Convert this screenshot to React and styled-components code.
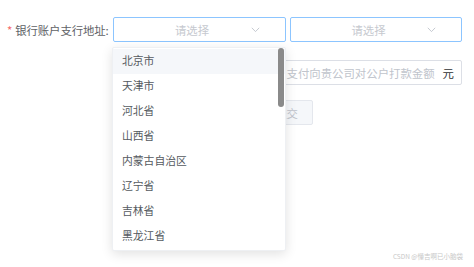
import styled, { createGlobalStyle } from 'styled-components';

const GlobalStyle = createGlobalStyle`
  html, body {
    margin: 0;
    background: #ffffff;
    font-family: "Noto Sans CJK SC", "Noto Sans", sans-serif;
  }
`

const provinces = ["北京市", "天津市", "河北省", "山西省", "内蒙古自治区", "辽宁省", "吉林省", "黑龙江省"];

const Chevron = () => (
    <svg width="9" height="6" viewBox="0 0 9 6" fill="none">
        <path d="M0.8 0.8L4.5 4.6L8.2 0.8" stroke="#c0c4cc" strokeWidth="0.9" />
    </svg>
)

const App = () => {
  return (
      <Page>
        <GlobalStyle />
        <FormRow>
            <Label><Star>*</Star>银行账户支行地址:</Label>
            <SelectBox>
                <Placeholder>请选择</Placeholder>
                <Arrow><Chevron /></Arrow>
            </SelectBox>
            <SelectBox $w={172}>
                <Placeholder>请选择</Placeholder>
                <Arrow><Chevron /></Arrow>
            </SelectBox>
        </FormRow>
        <FormRow $gap={18}>
            <Label />
            <InputBox>
                <InputHint>支付向贵公司对公户打款金额</InputHint>
                <Suffix>元</Suffix>
            </InputBox>
        </FormRow>
        <FormRow $gap={15}>
            <Label />
            <SubmitButton>提交</SubmitButton>
        </FormRow>
        <Dropdown>
            {provinces.map((name, i) => (
                <Option key={name} $active={i === 0}>{name}</Option>
            ))}
            <ScrollThumb />
        </Dropdown>
        <Watermark>CSDN @懂吉啊已小脑袋</Watermark>
      </Page>
  )
}

export default App

const Page = styled.div`
    position: relative;
    padding-top: 17px;
    display: flex;
    flex-direction: column;
    width: 474px;
    height: 267px;
    box-sizing: border-box;
    overflow: hidden;
`
const FormRow = styled.div`
    display: flex;
    flex-direction: row;
    align-items: center;
    gap: 4px;
    margin-top: ${p => p.$gap || 0}px;
    height: 25px;
`
const Label = styled.div`
    width: 109px;
    box-sizing: border-box;
    padding-left: 7px;
    font-size: 11.4px;
    color: #606266;
    white-space: nowrap;
    letter-spacing: -0.1px;
`
const Star = styled.span`
    color: #f56c6c;
    margin-right: 3px;
`
const SelectBox = styled.div`
    position: relative;
    width: ${p => p.$w || 173}px;
    height: 25px;
    box-sizing: border-box;
    border: 1px solid #8cc5ff;
    border-radius: 2px;
    display: flex;
    align-items: center;
    padding: 0 25px 0 10px;
`
const Placeholder = styled.div`
    flex: 1;
    text-align: center;
    font-size: 11.4px;
    color: #c6c9cf;
`
const Arrow = styled.div`
    position: absolute;
    right: 25px;
    top: 9px;
    display: flex;
`
const Dropdown = styled.div`
    position: absolute;
    left: 112px;
    top: 47px;
    width: 174px;
    box-sizing: border-box;
    padding: 1px 0;
    background: #ffffff;
    border: 1px solid #eef0f3;
    border-radius: 2px;
    box-shadow: 0 3px 12px rgba(0, 0, 0, 0.12);
    z-index: 10;
`
const Option = styled.div`
    height: 25px;
    line-height: 22px;
    padding: 0 9px;
    font-size: 10.8px;
    color: #555a60;
    background: ${p => p.$active ? '#f5f7fa' : 'transparent'};
`
const ScrollThumb = styled.div`
    position: absolute;
    right: 1px;
    top: 0;
    width: 6px;
    height: 59px;
    border-radius: 3px;
    background: #8a8a8a;
`
const InputBox = styled.div`
    width: 349px;
    height: 25px;
    box-sizing: border-box;
    border: 1px solid #dcdfe6;
    border-radius: 2px;
    display: flex;
    align-items: center;
    padding: 0 7px 0 10px;
`
const InputHint = styled.div`
    flex: 1;
    text-align: right;
    font-size: 11.4px;
    color: #c0c4cc;
    padding-right: 8px;
`
const Suffix = styled.div`
    font-size: 11.4px;
    color: #303133;
`
const SubmitButton = styled.div`
    margin-left: 147px;
    width: 53px;
    height: 25px;
    box-sizing: border-box;
    border: 1px solid #e4e7ed;
    border-radius: 2px;
    background: #f5f7fa;
    color: #c0c4cc;
    font-size: 11.4px;
    display: flex;
    align-items: center;
    justify-content: center;
`
const Watermark = styled.div`
    position: absolute;
    right: 11px;
    bottom: 6px;
    font-size: 6.5px;
    color: #c8c8c8;
`
